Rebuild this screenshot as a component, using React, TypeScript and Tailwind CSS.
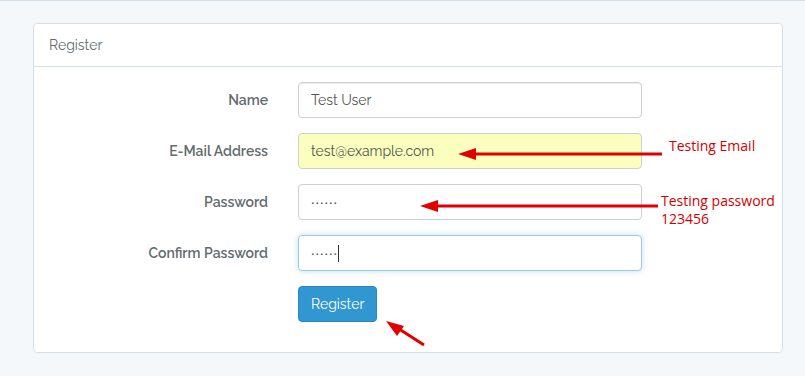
import React from 'react'

const font = { fontFamily: 'Raleway, Lato, "Open Sans", sans-serif' }

function Row({ label, children }: { label: string; children: React.ReactNode }) {
  return (
    <div className="flex items-center mb-[15px]">
      <label className="w-[249px] pr-[15px] text-right text-[14px] font-semibold text-[#636b6f]">{label}</label>
      <div className="pl-[15px]">{children}</div>
    </div>
  )
}

export default function App() {
  const input = 'w-[344px] h-[36px] rounded-[4px] border px-[12px] text-[14px] text-[#555] flex items-center'
  return (
    <div className="relative w-[805px] h-[376px] bg-[#f5f8fa] border-t border-[#d3e0e9] overflow-hidden" style={font}>
      <div className="ml-[33px] mt-[22px] w-[750px] bg-white border border-[#d3e0e9] rounded-[4px]">
        <div className="h-[43px] px-[15px] flex items-center border-b border-[#d3e0e9] text-[14px] text-[#636b6f]">
          Register
        </div>
        <div className="pt-[15px] pb-[15px]">
          <Row label="Name">
            <div className={`${input} border-[#ccd0d2] bg-white shadow-[inset_0_1px_1px_rgba(0,0,0,0.075)]`}>Test User</div>
          </Row>
          <Row label="E-Mail Address">
            <div className={`${input} border-[#ccd0d2] bg-[#faffbd]`}>test@example.com</div>
          </Row>
          <Row label="Password">
            <div className={`${input} border-[#ccd0d2] bg-white`}>
              <span className="text-[10px] tracking-[1px]">••••••</span>
            </div>
          </Row>
          <Row label="Confirm Password">
            <div className={`${input} border-[#98cbe8] bg-white shadow-[0_0_6px_rgba(152,203,232,0.6)]`}>
              <span className="text-[10px] tracking-[1px]">••••••</span>
              <span className="inline-block w-px h-[17px] bg-[#333]" />
            </div>
          </Row>
          <div className="flex mb-[15px]">
            <div className="w-[264px]" />
            <button className="h-[36px] px-[12px] rounded-[4px] bg-[#3097d1] border border-[#2a88bd] text-white text-[14px]">
              Register
            </button>
          </div>
        </div>
      </div>

      {/* annotations */}
      <div className="absolute left-[669px] top-[134px] text-[14px] text-[#d40000]" style={{ fontFamily: '"Open Sans", sans-serif' }}>
        Testing Email
      </div>
      <div className="absolute left-[661px] top-[191px] text-[14px] leading-[18px] text-[#d40000]" style={{ fontFamily: '"Open Sans", sans-serif' }}>
        Testing password
        <br />
        123456
      </div>
      <svg className="absolute left-0 top-0" width="805" height="376" viewBox="0 0 805 376">
        <g stroke="#e00000" strokeWidth="3" fill="#e00000">
          <line x1="662" y1="153" x2="470" y2="153" />
          <polygon points="458,153 476,147 476,159" stroke="none" />
          <line x1="658" y1="205" x2="432" y2="205" />
          <polygon points="420,205 438,199 438,211" stroke="none" />
          <line x1="424" y1="344" x2="396" y2="326" />
          <polygon points="386,320 404,325 397,335" stroke="none" />
        </g>
      </svg>
    </div>
  )
}
